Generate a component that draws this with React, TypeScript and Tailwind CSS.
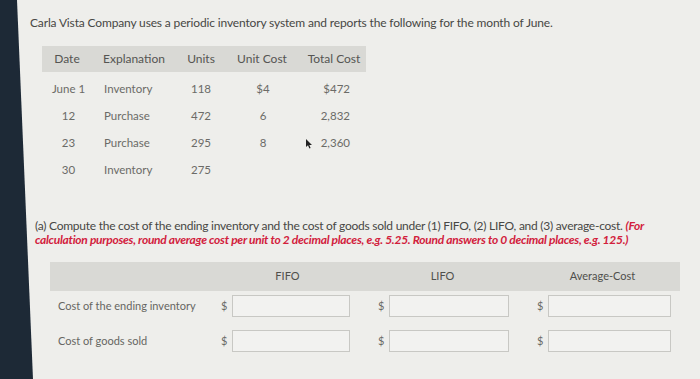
import React from 'react';

type Row = { date: string; explanation: string; units: string; unitCost: string; totalCost: string; pointer?: boolean };

const rows: Row[] = [
  { date: 'June 1', explanation: 'Inventory', units: '118', unitCost: '$4', totalCost: '$472' },
  { date: '12', explanation: 'Purchase', units: '472', unitCost: '6', totalCost: '2,832' },
  { date: '23', explanation: 'Purchase', units: '295', unitCost: '8', totalCost: '2,360', pointer: true },
  { date: '30', explanation: 'Inventory', units: '275', unitCost: '', totalCost: '' },
];

const cols = 'grid grid-cols-[50px_88px_42px_80px_64px]';

const Pointer = () => (
  <svg width="7" height="10" viewBox="0 0 7 10" className="mr-[8px] mt-[3px]">
    <path d="M0 0 L0 8 L2 6.3 L3.4 9.6 L4.6 9.1 L3.3 5.9 L6 5.9 Z" fill="#222" />
  </svg>
);

const AnswerCell = ({ pad, width }: { pad: string; width: string }) => (
  <div className={`flex items-center ${pad}`}>
    <span className="text-[11px] text-[#6a6a66] w-[11px]">$</span>
    <div className={`h-[22px] ${width} border border-[#c8c8c4] bg-[#f2f2f0]`} />
  </div>
);

export default function App() {
  return (
    <div className="w-[700px] h-[379px] flex bg-[#1d2936] overflow-hidden font-['Lato','Liberation_Sans',sans-serif]">
      <div className="flex-1 bg-[#eeeeeb] [clip-path:polygon(17px_0,100%_0,100%_100%,33px_100%)] flex flex-col">
        <p className="mt-[16px] ml-[30px] text-[12px] leading-[14px] text-[#474744] tracking-[-0.15px]">
          Carla Vista Company uses a periodic inventory system and reports the following for the month of June.
        </p>

        {/* Purchases table */}
        <div className="mt-[16px] ml-[42px] w-[324px] text-[11.5px] text-[#6b6b67]">
          <div className={`${cols} h-[26px] items-center bg-[#d9d9d5] text-[12px] text-[#555552]`}>
            <span className="text-center">Date</span>
            <span className="pl-[11px]">Explanation</span>
            <span className="text-center">Units</span>
            <span className="text-center">Unit Cost</span>
            <span className="text-center">Total Cost</span>
          </div>
          <div className="pt-[3px]">
            {rows.map((r) => (
              <div key={r.date} className={`${cols} h-[27px] items-center`}>
                <span className="text-center pl-[3px]">{r.date}</span>
                <span className="pl-[12px]">{r.explanation}</span>
                <span className="text-center">{r.units}</span>
                <span className="text-center pl-[2px]">{r.unitCost}</span>
                <span className="flex justify-end items-center pr-[16px]">
                  {r.pointer && <Pointer />}
                  {r.totalCost}
                </span>
              </div>
            ))}
          </div>
        </div>

        <p className="mt-[36px] ml-[35px] text-[12px] leading-[14px] text-[#474744] tracking-[-0.25px]">
          (a) Compute the cost of the ending inventory and the cost of goods sold under (1) FIFO, (2) LIFO, and (3) average-cost.{' '}
          <span className="text-[#d2203c] font-bold italic tracking-[-0.28px]">
            (For
            <br />
            calculation purposes, round average cost per unit to 2 decimal places, e.g. 5.25. Round answers to 0 decimal places, e.g. 125.)
          </span>
        </p>

        {/* Answer grid */}
        <div className="mt-[15px] ml-[50px] w-[630px] text-[11px] text-[#666662]">
          <div className="grid grid-cols-[165px_145px_165px_155px] h-[29px] items-center bg-[#d9d9d5] text-[#4f4f4c]">
            <span />
            <span className="text-center">FIFO</span>
            <span className="text-center">LIFO</span>
            <span className="text-center">Average-Cost</span>
          </div>
          <div className="flex flex-col gap-[5px]">
            {['Cost of the ending inventory', 'Cost of goods sold'].map((label) => (
              <div key={label} className="grid grid-cols-[165px_145px_165px_155px] h-[30px] items-center">
                <span className="pl-[8px]">{label}</span>
                <AnswerCell pad="pl-[6px]" width="w-[118px]" />
                <AnswerCell pad="pl-[18px]" width="w-[120px]" />
                <AnswerCell pad="pl-[12px]" width="w-[123px]" />
              </div>
            ))}
          </div>
        </div>
      </div>
    </div>
  );
}
